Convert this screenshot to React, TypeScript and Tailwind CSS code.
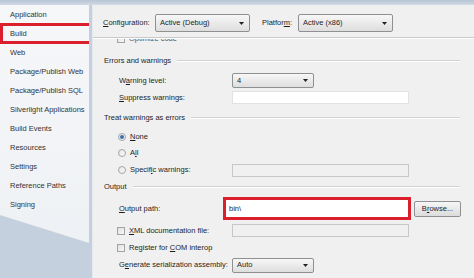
import React from "react";

const navItems = [
  "Application",
  "Build",
  "Web",
  "Package/Publish Web",
  "Package/Publish SQL",
  "Silverlight Applications",
  "Build Events",
  "Resources",
  "Settings",
  "Reference Paths",
  "Signing",
];

const Arrow = () => (
  <svg width="5" height="3" viewBox="0 0 5 3" className="shrink-0">
    <path d="M0 0h5L2.5 3z" fill="#222" />
  </svg>
);

const Select = ({ value, w, h = "h-[15px]" }: { value: string; w: string; h?: string }) => (
  <div
    className={`${w} ${h} flex items-center justify-between rounded-[2px] border border-[#8f9091] bg-gradient-to-b from-[#f7f7f7] to-[#dedede] pl-[4px] pr-[5px]`}
  >
    <span>{value}</span>
    <Arrow />
  </div>
);

const Section = ({ title, className }: { title: string; className: string }) => (
  <div className={`flex h-[14px] items-center pl-[11px] pr-[14px] ${className}`}>
    <span>{title}</span>
    <div className="ml-[6px] flex-1 border-t border-b border-t-[#d2d2d2] border-b-white" />
  </div>
);

const Checkbox = () => (
  <span className="h-[8px] w-[8px] shrink-0 border border-[#a3a3a3] bg-gradient-to-br from-[#e2e2e2] to-[#f6f6f6]" />
);

const Radio = ({ on }: { on?: boolean }) => (
  <span className="flex h-[8px] w-[8px] shrink-0 items-center justify-center rounded-full border border-[#a5a5a5] bg-gradient-to-br from-[#e6e6e6] to-[#fafafa]">
    {on && <span className="h-[4px] w-[4px] rounded-full bg-[#3a6fb0]" />}
  </span>
);

export default function App() {
  return (
    <div className="flex h-[278px] w-[474px] flex-col overflow-hidden bg-[#c4d0de] font-['Liberation_Sans',Arial,sans-serif] text-[7.5px] text-[#1e1e1e]">
      <div className="h-[5px] shrink-0 bg-gradient-to-b from-[#b7c4d4] to-[#d2dbe6]" />
      <div className="flex min-h-0 flex-1">
        {/* left nav */}
        <aside className="w-[92px] shrink-0">
          <div className="flex h-full w-[89px] flex-col bg-gradient-to-b from-[#f6f7f9] to-[#edf0f4] [clip-path:polygon(0_0,100%_0,100%_238px,0_210px)]">
            {navItems.map((item) => (
              <div key={item} className="relative flex h-[19px] shrink-0 items-center pl-[10px] text-[#333]">
                {item}
                {item === "Build" && (
                  <span className="absolute -top-[1px] left-0 h-[21px] w-[93px] border-[3px] border-[#dc1f2d]" />
                )}
              </div>
            ))}
          </div>
        </aside>

        {/* page */}
        <main className="flex min-w-0 flex-1 flex-col border-l border-[#e6eaef] bg-[#f0f0f0]">
          <div className="flex h-[33px] shrink-0 items-start border-b border-[#c9c9c9] pl-[10px] pt-[9px]">
            <div className="flex h-[18px] items-center">
              <span className="w-[52px]">
                <u>C</u>onfiguration:
              </span>
              <Select value="Active (Debug)" w="w-[95px]" h="h-[18px]" />
              <span className="ml-[12px] w-[36px]">
                Platfor<u>m</u>:
              </span>
              <Select value="Active (x86)" w="w-[95px]" h="h-[18px]" />
            </div>
          </div>
          <div className="h-px shrink-0 bg-white" />

          <div className="flex h-[7px] items-end overflow-hidden pl-[24px] text-[#555]">
            <div className="flex h-[12px] items-center gap-[4px] pb-[2px]">
              <Checkbox />
              <span>Optimize code</span>
            </div>
          </div>

          <Section title="Errors and warnings" className="mt-[8px]" />
          <div className="mt-[5px] flex h-[15px] items-center pl-[26px]">
            <span className="w-[113px] shrink-0">
              W<u>a</u>rning level:
            </span>
            <Select value="4" w="w-[82px]" />
          </div>
          <div className="mt-[3px] flex h-[13px] items-center pl-[26px]">
            <span className="w-[113px] shrink-0">
              <u>S</u>uppress warnings:
            </span>
            <div className="h-[13px] w-[177px] border border-[#e2e2e2] bg-white" />
          </div>

          <Section title="Treat warnings as errors" className="mt-[7px]" />
          <div className="mt-[4px] flex h-[16px] items-center gap-[4px] pl-[25px]">
            <Radio on />
            <span>
              <u>N</u>one
            </span>
          </div>
          <div className="flex h-[16px] items-center gap-[4px] pl-[25px]">
            <Radio />
            <span>
              A<u>l</u>l
            </span>
          </div>
          <div className="mt-px flex h-[16px] items-center pl-[25px]">
            <div className="flex w-[114px] shrink-0 items-center gap-[4px]">
              <Radio />
              <span>
                Specif<u>i</u>c warnings:
              </span>
            </div>
            <div className="h-[13px] w-[177px] border border-[#c8c8c8] bg-[#f0f0f0]" />
          </div>

          <Section title="Output" className="mt-[2px]" />
          <div className="mt-[3px] flex h-[23px] items-center pl-[26px]">
            <span className="w-[104px] shrink-0">
              <u>O</u>utput path:
            </span>
            <div className="flex h-[23px] w-[188px] items-center border-[3px] border-[#dc1f2d] bg-white pl-[3px]">
              bin\
            </div>
            <div className="ml-[3px] flex h-[16px] w-[47px] items-center justify-center rounded-[2px] border border-[#8f9091] bg-gradient-to-b from-[#f6f6f6] to-[#dcdcdc]">
              B<u>r</u>owse...
            </div>
          </div>
          <div className="mt-[4px] flex h-[13px] items-center pl-[24px]">
            <div className="flex w-[115px] shrink-0 items-center gap-[4px]">
              <Checkbox />
              <span>
                <u>X</u>ML documentation file:
              </span>
            </div>
            <div className="h-[13px] w-[177px] border border-[#c8c8c8] bg-[#f0f0f0]" />
          </div>
          <div className="mt-[4px] flex h-[14px] items-center gap-[4px] pl-[24px]">
            <Checkbox />
            <span>
              Register for <u>C</u>OM interop
            </span>
          </div>
          <div className="mt-[3px] flex h-[14px] items-center pl-[26px]">
            <span className="w-[113px] shrink-0">
              G<u>e</u>nerate serialization assembly:
            </span>
            <Select value="Auto" w="w-[82px]" />
          </div>
        </main>
      </div>
    </div>
  );
}
